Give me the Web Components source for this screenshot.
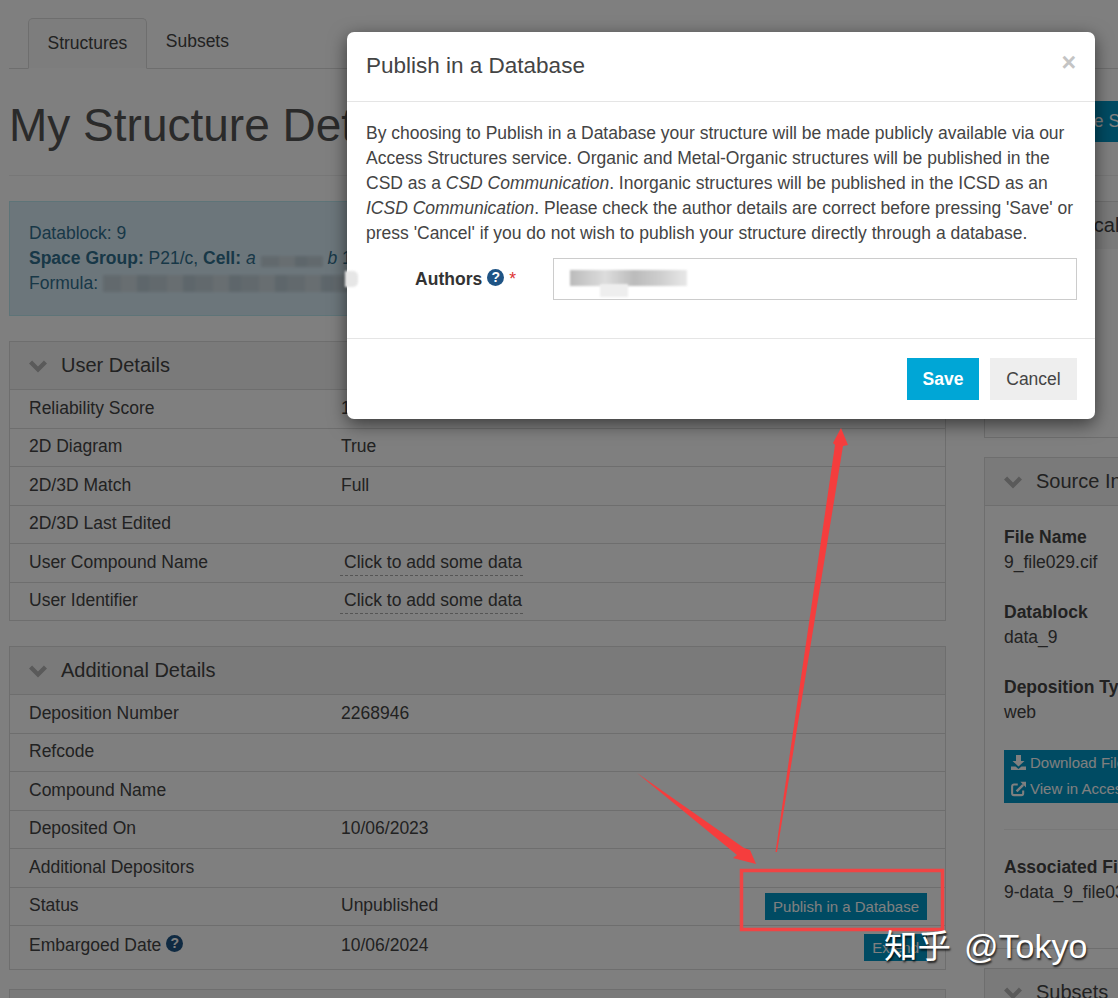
<!DOCTYPE html>
<html lang="en">
<head>
<meta charset="utf-8">
<title>My Structure Details</title>
<style>
  html, body { margin: 0; height: 998px; overflow: hidden; background: #fff; }
  body { font: 17.5px/25px "Liberation Sans", Arial, sans-serif; color: #444; }
</style>
</head>
<body>
<structure-page>
  <page-tabs slot="tabs"></page-tabs>

  <info-alert slot="alert">
    <div>Datablock: 9</div>
    <div><b>Space Group:</b> P21/c, <b>Cell:</b> <i>a</i> <smudge-text w="62" h="11"></smudge-text> <i>b</i> 1</div>
    <div>Formula: <smudge-text w="262" h="17"></smudge-text></div>
  </info-alert>

  <detail-panel slot="left" title="User Details">
    <data-row label="Reliability Score">12.5</data-row>
    <data-row label="2D Diagram">True</data-row>
    <data-row label="2D/3D Match">Full</data-row>
    <data-row label="2D/3D Last Edited"></data-row>
    <data-row label="User Compound Name"><edit-link>Click to add some data</edit-link></data-row>
    <data-row label="User Identifier"><edit-link>Click to add some data</edit-link></data-row>
  </detail-panel>

  <detail-panel slot="left" title="Additional Details">
    <data-row label="Deposition Number">2268946</data-row>
    <data-row label="Refcode"></data-row>
    <data-row label="Compound Name"></data-row>
    <data-row label="Deposited On">10/06/2023</data-row>
    <data-row label="Additional Depositors"></data-row>
    <data-row label="Status">Unpublished
      <action-button slot="action" style="top:5.5px">Publish in a Database</action-button></data-row>
    <data-row label="Embargoed Date" help tall>10/06/2024
      <action-button slot="action" style="top:8px">Extend</action-button></data-row>
  </detail-panel>

  <detail-panel slot="left" title="Publication Details" style="margin-top:-6px"></detail-panel>

  <detail-panel slot="right" title="Chemical Diagram" style="height:237px"></detail-panel>

  <detail-panel slot="right" title="Source Information">
    <source-body>
      <field-item name="File Name">9_file029.cif</field-item>
      <field-item name="Datablock">data_9</field-item>
      <field-item name="Deposition Type">web</field-item>
      <file-actions></file-actions>
      <field-item name="Associated Files">9-data_9_file030.hkl</field-item>
    </source-body>
  </detail-panel>

  <detail-panel slot="right" title="Subsets"></detail-panel>
</structure-page>

<publish-modal></publish-modal>
<red-annotations></red-annotations>

<script>
function shadow(el, html) {
  el.attachShadow({ mode: 'open' }).innerHTML = html;
}

const CHEVRON = `<svg width="18" height="13" viewBox="0 0 18 13"><path d="M9 12.6 0 3.6 3.1.5 9 6.4 14.9.5 18 3.6Z" fill="#b4b4b4"/></svg>`;

class StructurePage extends HTMLElement {
  connectedCallback() {
    shadow(this, `
      <style>
        :host { display: block; width: 1275px; padding-left: 9px; }
        .head { display: flex; align-items: center; height: 106px; border-bottom: 1px solid #eee; }
        h1 { flex: 0 0 1026px; margin: 6px 0 0; font-size: 46px; line-height: 50px; font-weight: 400; color: #555; white-space: nowrap; }
        .delete { flex: none; height: 41px; margin-top: -1px; padding: 0 18px; display: flex; align-items: center; background: #0096c6; color: #fff; white-space: nowrap; }
        .cols { display: grid; grid-template-columns: 937px 300px; column-gap: 38px; margin-top: 25px; align-items: start; }
        .col { display: flex; flex-direction: column; }
        .right { gap: 19px; }
        .left { gap: 25px; }
      </style>
      <slot name="tabs"></slot>
      <div class="head">
        <h1>My Structure Details</h1>
        <div class="delete">Delete Structure</div>
      </div>
      <div class="cols">
        <div class="col left"><slot name="alert"></slot><slot name="left"></slot></div>
        <div class="col right"><slot name="right"></slot></div>
      </div>`);
  }
}

class PageTabs extends HTMLElement {
  connectedCallback() {
    shadow(this, `
      <style>
        :host { display: flex; height: 69px; box-sizing: border-box; padding: 18px 0 0 19px; border-bottom: 1px solid #ddd; }
        div { box-sizing: border-box; height: 51px; padding: 0 19px; }
        .on { border: 1px solid #ddd; border-bottom-color: #fff; border-radius: 5px 5px 0 0; background: #fafafa; padding: 12px 18.5px 0; }
        .off { padding-top: 11px; }
      </style>
      <div class="on">Structures</div>
      <div class="off">Subsets</div>`);
  }
}

class InfoAlert extends HTMLElement {
  connectedCallback() {
    shadow(this, `
      <style>
        :host { display: block; box-sizing: border-box; height: 115px; padding: 19px 19px; background: #d9edf7; border: 1px solid #bce8f1; color: #31708f; white-space: nowrap; overflow: hidden; }
      </style>
      <slot></slot>`);
  }
}

class SmudgeText extends HTMLElement {
  connectedCallback() {
    const w = this.getAttribute('w'), h = this.getAttribute('h');
    shadow(this, `
      <style>
        :host { display: inline-block; vertical-align: -3px; height: ${h}px; width: ${w}px; background: repeating-linear-gradient(90deg, #c4d3db 0 18px, #d0dce2 18px 34px, #bccdd6 34px 46px); filter: blur(1.5px); }
      </style>`);
  }
}

class DetailPanel extends HTMLElement {
  connectedCallback() {
    shadow(this, `
      <style>
        :host { display: block; box-sizing: border-box; border: 1px solid #ddd; }
        header { display: flex; align-items: center; gap: 14px; box-sizing: border-box; height: 47px; padding: 0 19px; background: #f5f5f5; font-size: 20px; white-space: nowrap; }
        header svg { flex: none; margin-top: 1px; }
      </style>
      <header>${CHEVRON}<span>${this.getAttribute('title')}</span></header>
      <slot></slot>`);
  }
}

class DataRow extends HTMLElement {
  connectedCallback() {
    const help = this.hasAttribute('help') ? '<help-icon></help-icon>' : '';
    shadow(this, `
      <style>
        :host { display: flex; align-items: center; box-sizing: border-box; height: 38.5px; padding: 0 19px 1px; border-top: 1px solid #ddd; position: relative; }
        :host([tall]) { height: 43.5px; padding-bottom: 4px; }
        .label { flex: 0 0 312px; display: flex; align-items: center; gap: 5px; white-space: nowrap; }
        .value { flex: 1; white-space: nowrap; }
      </style>
      <div class="label">${this.getAttribute('label')}${help}</div>
      <div class="value"><slot></slot></div>
      <slot name="action"></slot>`);
  }
}

class HelpIcon extends HTMLElement {
  connectedCallback() {
    shadow(this, `
      <style>
        :host { display: inline-flex; align-items: center; justify-content: center; width: 17px; height: 17px; margin-top: -3px; border-radius: 50%; background: #1f5485; color: #fff; font: bold 14px/17px "Liberation Sans", sans-serif; }
      </style>?`);
  }
}

class EditLink extends HTMLElement {
  connectedCallback() {
    shadow(this, `
      <style>
        :host { display: inline-block; padding: 0 1px 0 4px; margin-left: -1px; line-height: 26px; border-bottom: 1px dashed #aaa; }
      </style><slot></slot>`);
  }
}

class ActionButton extends HTMLElement {
  connectedCallback() {
    shadow(this, `
      <style>
        :host { position: absolute; right: 18px; top: 6px; display: block; height: 27px; padding: 0 8px; background: #0096c6; color: #fff; font-size: 15px; line-height: 27px; white-space: nowrap; }
      </style><slot></slot>`);
  }
}

class SourceBody extends HTMLElement {
  connectedCallback() {
    shadow(this, `
      <style>
        :host { display: flex; flex-direction: column; gap: 25px; box-sizing: border-box; height: 443px; padding: 18.5px 19px; border-top: 1px solid #ddd; white-space: nowrap; overflow: hidden; }
      </style><slot></slot>`);
  }
}

class FieldItem extends HTMLElement {
  connectedCallback() {
    shadow(this, `
      <style>
        :host { display: block; }
        b { display: block; }
      </style>
      <b>${this.getAttribute('name')}</b><slot></slot>`);
  }
}

class FileActions extends HTMLElement {
  connectedCallback() {
    shadow(this, `
      <style>
        :host { display: block; padding-bottom: 26px; border-bottom: 1px solid #eee; }
        .box { box-sizing: border-box; height: 53px; padding: 0 7px; background: #0096c6; color: #fff; font-size: 15px; line-height: 26.5px; }
        div div { display: flex; align-items: center; gap: 4px; }
        svg { flex: none; }
      </style>
      <div class="box">
        <div><svg width="15" height="15" viewBox="0 0 15 15" fill="#fff"><path d="M5 0h5v6h3.5L7.5 11.5 1.5 6H5ZM0 11.5h4.5l3 2.5 3-2.5H15V15H0Z"/></svg>Download File</div>
        <div><svg width="15" height="16" viewBox="0 0 16 16" fill="none" stroke="#fff" stroke-width="2.2"><path d="M13 9.5v3a2 2 0 0 1-2 2H3.2a2 2 0 0 1-2-2V5.2a2 2 0 0 1 2-2h4"/><path d="M6 10.5 13 3.5" stroke-width="2.6"/><path d="M10 .3h6v6Z" fill="#fff" stroke="none"/></svg>View in Access Structures</div>
      </div>`);
  }
}

class PublishModal extends HTMLElement {
  connectedCallback() {
    shadow(this, `
      <style>
        .back { position: absolute; inset: 0; background: rgba(0,0,0,.5); }
        .dialog { position: absolute; left: 347px; top: 32px; width: 748px; height: 387px; box-sizing: border-box; background: #fff; border-radius: 7px; box-shadow: 0 5px 18px rgba(0,0,0,.55); display: flex; flex-direction: column; color: #444; }
        header { flex: none; display: flex; justify-content: space-between; box-sizing: border-box; height: 70px; padding: 20px 19px; border-bottom: 1px solid #e5e5e5; font-size: 22.5px; line-height: 27px; }
        .close { font-weight: 700; font-size: 25px; line-height: 20px; color: #c4c4c4; }
        .body { flex: 1; padding: 19px 18px 0 19px; }
        p { margin: 0; }
        .form { display: flex; align-items: center; margin-top: 12px; }
        label { flex: 0 0 187px; box-sizing: border-box; display: flex; justify-content: flex-end; align-items: center; gap: 5px; padding-right: 37px; font-weight: 700; color: #333; }
        .req { color: #d33; font-weight: 400; }
        .input { position: relative; flex: 1; height: 42px; border: 1px solid #ccc; box-sizing: border-box; }
        .smear { position: absolute; left: 16px; top: 11px; width: 117px; height: 16px; background: linear-gradient(90deg, #bbb, #ddd 30%, #bbb 55%, #ccc 75%, #e8e8e8); filter: blur(1px); }
        .smear2 { position: absolute; left: 46px; top: 25px; width: 28px; height: 13px; background: #eee; filter: blur(1px); }
        footer { flex: none; display: flex; justify-content: flex-end; gap: 11px; box-sizing: border-box; height: 81px; padding: 19px 18px 0; border-top: 1px solid #e5e5e5; }
        .btn { height: 42px; display: flex; align-items: center; justify-content: center; box-sizing: border-box; }
        .save { width: 72px; background: #00a6d6; color: #fff; font-weight: 700; }
        .cancel { width: 87px; background: #eee; color: #444; }
      </style>
      <div class="back"></div>
      <div class="dialog">
        <header><span>Publish in a Database</span><span class="close">×</span></header>
        <div class="body">
          <p>By choosing to Publish in a Database your structure will be made publicly available via our Access Structures service. Organic and Metal-Organic structures will be published in the CSD as a <i>CSD Communication</i>. Inorganic structures will be published in the ICSD as an <i>ICSD Communication</i>. Please check the author details are correct before pressing 'Save' or press 'Cancel' if you do not wish to publish your structure directly through a database.</p>
          <div class="form">
            <label>Authors <help-icon></help-icon><span class="req">*</span></label>
            <div class="input"><div class="smear"></div><div class="smear2"></div></div>
          </div>
        </div>
        <footer><div class="btn save">Save</div><div class="btn cancel">Cancel</div></footer>
      </div>`);
  }
}

class RedAnnotations extends HTMLElement {
  connectedCallback() {
    shadow(this, `
      <style>
        svg { position: absolute; left: 0; top: 0; }
        .smudge { position: absolute; left: 345px; top: 271px; width: 13px; height: 16px; border-radius: 0 5px 5px 0; background: #e6e6e6; filter: blur(1px); }
        .mark { position: absolute; left: 884px; top: 923px; color: #fff; font: 33.5px/42px "Noto Sans CJK SC", "Noto Sans", sans-serif; white-space: nowrap; text-shadow: 1px 2px 2px rgba(0,0,0,.75); }
        .mark span { margin-left: 13px; font-family: "Liberation Sans", sans-serif; font-size: 34px; }
      </style>
      <div class="smudge"></div>
      <svg width="1118" height="998" viewBox="0 0 1118 998">
        <g fill="#f53d3d">
          <path d="M637 773 744 848 750 850 756 864 733 858 737 855Z"/>
          <path d="M775.5 852 835 445 833 443 841 428 848 445 843 446 777 852Z"/>
        </g>
        <rect x="741.5" y="870.5" width="201" height="59" fill="none" stroke="#f04444" stroke-width="3.5"/>
      </svg>
      <div class="mark">知乎<span>@Tokyo</span></div>`);
  }
}

customElements.define('structure-page', StructurePage);
customElements.define('page-tabs', PageTabs);
customElements.define('info-alert', InfoAlert);
customElements.define('smudge-text', SmudgeText);
customElements.define('detail-panel', DetailPanel);
customElements.define('data-row', DataRow);
customElements.define('help-icon', HelpIcon);
customElements.define('edit-link', EditLink);
customElements.define('action-button', ActionButton);
customElements.define('source-body', SourceBody);
customElements.define('field-item', FieldItem);
customElements.define('file-actions', FileActions);
customElements.define('publish-modal', PublishModal);
customElements.define('red-annotations', RedAnnotations);
</script>
</body>
</html>
